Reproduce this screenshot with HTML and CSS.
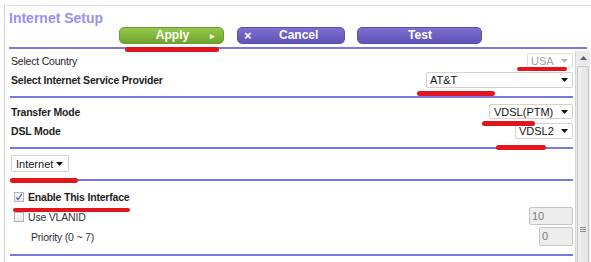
FILE: index.html
```html
<!DOCTYPE html>
<html>
<head>
<meta charset="utf-8">
<link rel="stylesheet" href="styles.css">
</head>
<body>
<div class="frame">
  <div class="header">
    <div class="title">Internet Setup</div>
    <div class="buttons">
      <div class="btn btn-green"><span class="btn-label">Apply</span><span class="btn-arrow">&#9656;</span></div>
      <div class="btn btn-purple btn-cancel"><span class="btn-x">&#215;</span><span class="btn-label">Cancel</span></div>
      <div class="btn btn-purple btn-test"><span class="btn-label">Test</span></div>
    </div>
  </div>
  <div class="body">
    <div class="form">
      <div class="section s1">
        <div class="row">
          <span class="label">Select Country</span>
          <span class="select sel-usa disabled">USA<svg class="caret" width="7" height="4" viewBox="0 0 7 4"><path d="M0 0H7L3.5 4Z" fill="#b8b8b8"/></svg></span>
        </div>
        <div class="row">
          <span class="label bold">Select Internet Service Provider</span>
          <span class="select sel-att">AT&amp;T<svg class="caret" width="7" height="4" viewBox="0 0 7 4"><path d="M0 0H7L3.5 4Z" fill="#111"/></svg></span>
        </div>
      </div>
      <div class="section s2">
        <div class="row">
          <span class="label bold">Transfer Mode</span>
          <span class="select sel-ptm">VDSL(PTM)<svg class="caret" width="7" height="4" viewBox="0 0 7 4"><path d="M0 0H7L3.5 4Z" fill="#111"/></svg></span>
        </div>
        <div class="row">
          <span class="label bold">DSL Mode</span>
          <span class="select sel-vdsl2">VDSL2<svg class="caret" width="7" height="4" viewBox="0 0 7 4"><path d="M0 0H7L3.5 4Z" fill="#111"/></svg></span>
        </div>
      </div>
      <div class="section s3">
        <div class="row">
          <span class="select sel-internet">Internet<svg class="caret" width="7" height="4" viewBox="0 0 7 4"><path d="M0 0H7L3.5 4Z" fill="#111"/></svg></span>
        </div>
      </div>
      <div class="section s4">
        <div class="row row-enable">
          <span class="check-label bold"><span class="checkbox"><svg width="8" height="8" viewBox="0 0 8 8"><path d="M1.2 4.3L3 6.5L6.8 0.8" fill="none" stroke="#4d6aa6" stroke-width="1.3"/></svg></span>Enable This Interface</span>
        </div>
        <div class="row row-vlan">
          <span class="check-label"><span class="checkbox"></span>Use VLANID</span>
          <span class="input in-vlan">10</span>
        </div>
        <div class="row row-prio">
          <span class="label prio">Priority (0 ~ 7)</span>
          <span class="input in-prio">0</span>
        </div>
      </div>
    </div>
    <div class="scrollbar">
      <div class="sb-up"><svg width="7" height="4" viewBox="0 0 7 4"><path d="M0 4H7L3.5 0Z" fill="#606060"/></svg></div>
      <div class="sb-thumb"><div class="grip"><i></i><i></i><i></i></div></div>
    </div>
  </div>

  <span class="mark m-apply"></span>
  <span class="mark m-usa"></span>
  <span class="mark m-att"></span>
  <span class="mark m-ptm"></span>
  <span class="mark m-vdsl2"></span>
  <span class="mark m-internet"></span>
  <span class="mark m-enable"></span>
</div>
</body>
</html>
```

FILE: styles.css
```css
html, body {
  margin: 0;
  padding: 0;
  background: #ffffff;
}
body {
  font-family: "Liberation Sans", Arial, sans-serif;
  color: #1a1a1a;
}
.frame {
  margin: 5px 0 0 4px;
  border-top: 1px solid #e3e3e3;
  border-left: 1px solid #d4d4d4;
  height: 256px;
  position: relative;
  overflow: hidden;
  display: flex;
  flex-direction: column;
}
.header {
  margin: 0 4px 0 4px;
  border-bottom: 2px solid #7a76e6;
  padding-bottom: 3px;
}
.title {
  margin-top: 4px;
  height: 16px;
  line-height: 16px;
  font-size: 14px;
  font-weight: bold;
  color: #9b90f0;
}
.buttons {
  margin-top: 1px;
  margin-left: 110px;
  display: flex;
  gap: 12px;
}
.btn {
  height: 17px;
  border-radius: 5px;
  color: #ffffff;
  font-size: 12px;
  font-weight: bold;
  line-height: 17px;
  display: flex;
  align-items: center;
  position: relative;
  box-sizing: border-box;
}
.btn-green {
  width: 105px;
  background: linear-gradient(#93c84a, #6fa52e);
  border: 1px solid #6a9a32;
  justify-content: center;
}
.btn-green .btn-label {
  margin-left: 2px;
}
.btn-arrow {
  position: absolute;
  right: 8px;
  top: 0;
  font-size: 9px;
  color: #e8f4d8;
}
.btn-purple {
  background: linear-gradient(#7d70d2, #5f53b6);
  border: 1px solid #5a4fae;
}
.btn-cancel {
  width: 108px;
  margin-left: 1px;
}
.btn-x {
  width: 14px;
  margin-left: 6px;
  font-size: 13px;
}
.btn-cancel .btn-label {
  margin-left: 21px;
}
.btn-test {
  width: 125px;
  justify-content: center;
}
.btn-test .btn-label {
  margin-left: 1px;
}

.body {
  flex: 1;
  display: flex;
  min-height: 0;
}
.form {
  flex: 1;
  padding: 0 2px 0 5px;
}
.section {
  border-bottom: 2px solid #7a76e6;
}
.s1 { padding: 2px 0 7px; }
.s2 { padding: 4px 0 7px; }
.s3 { padding: 5px 0 6px; }
.s4 { padding: 6px 0 8px; }

.row {
  height: 19px;
  display: flex;
  align-items: center;
  justify-content: space-between;
}
.row-enable { height: 19px; }
.row-vlan { height: 20px; }
.row-prio { height: 20px; }

.label, .check-label {
  font-size: 10.5px;
  letter-spacing: -0.2px;
  color: #1e1e1e;
  padding-left: 1px;
}
.bold {
  font-weight: bold;
}
.prio {
  padding-left: 21px;
  color: #333;
  position: relative;
  top: 1px;
}
.check-label {
  display: flex;
  align-items: center;
  padding-left: 4px;
}
.row-vlan .check-label {
  position: relative;
  top: 1px;
  color: #333;
}
.checkbox {
  width: 10px;
  height: 10px;
  box-sizing: border-box;
  border: 1px solid #b5b5b5;
  background: linear-gradient(#fdfdfd, #e6e6e6);
  margin-right: 4px;
  display: flex;
  align-items: center;
  justify-content: center;
}

.select {
  box-sizing: border-box;
  border: 1px solid #d2d2d2;
  border-radius: 2px;
  background: #ffffff;
  font-size: 11px;
  color: #141414;
  display: flex;
  align-items: center;
  justify-content: space-between;
  padding: 0 4px 0 3px;
}
.select.disabled {
  color: #a3a3a3;
  border-color: #dcdcdc;
}
.sel-usa { width: 46px; height: 15px; }
.sel-att { width: 147px; height: 16px; }
.sel-ptm { width: 84px; height: 15px; padding-left: 4px; }
.sel-vdsl2 { width: 58px; height: 16px; }
.sel-internet { width: 58px; height: 17px; margin-left: 1px; padding-left: 4px; padding-right: 5px; }

.input {
  box-sizing: border-box;
  border: 1px solid #c4c4c4;
  border-radius: 2px;
  background: #ededed;
  color: #7a7a7a;
  font-size: 11px;
  padding-left: 2px;
  display: flex;
  align-items: center;
}
.in-vlan { width: 44px; height: 18px; }
.in-prio { width: 34px; height: 19px; }

.scrollbar {
  width: 15px;
  margin: 2px 1px 0 0;
  background: #eaeaea;
  border-left: 1px solid #d6d6d6;
  box-sizing: border-box;
  display: flex;
  flex-direction: column;
}
.sb-up {
  height: 13px;
  display: flex;
  align-items: center;
  justify-content: center;
}
.sb-thumb {
  flex: 1;
  margin: 2px 1px 0 1px;
  background: linear-gradient(90deg, #f2f2f2, #e2e2e2);
  border: 1px solid #c6c6c6;
  border-bottom: none;
  border-radius: 2px 2px 0 0;
}
.grip {
  margin: 160px auto 0;
  width: 6px;
  display: flex;
  flex-direction: column;
  gap: 1px;
}
.grip i {
  display: block;
  height: 1px;
  background: #8a8a8a;
}

.mark {
  position: absolute;
  height: 5px;
  border-radius: 3px;
  background: #e2151d;
}
.m-apply { left: 120px; top: 41px; width: 94px; }
.m-usa { left: 512px; top: 61px; width: 50px; height: 4px; }
.m-att { left: 412px; top: 85px; width: 78px; }
.m-ptm { left: 477px; top: 115px; width: 53px; }
.m-vdsl2 { left: 491px; top: 139px; width: 50px; }
.m-internet { left: 5px; top: 172px; width: 68px; }
.m-enable { left: 8px; top: 202px; width: 117px; height: 4px; }
```
